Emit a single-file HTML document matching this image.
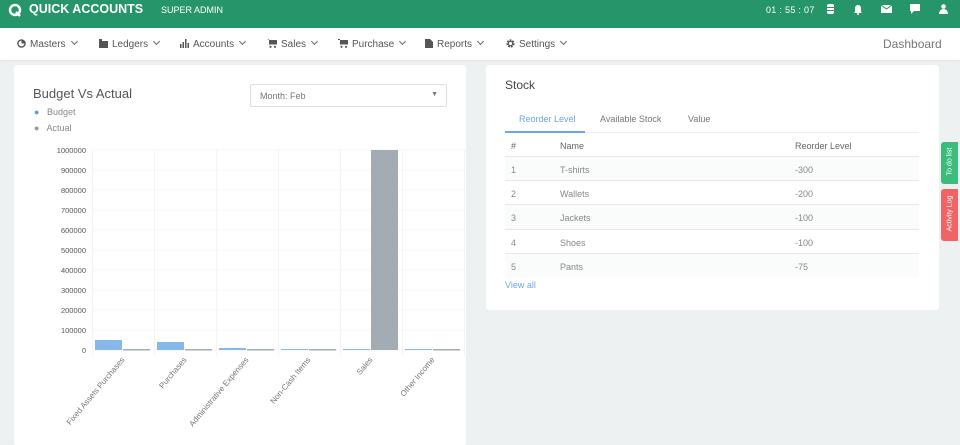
<!DOCTYPE html>
<html><head><meta charset="utf-8"><style>
*{margin:0;padding:0;box-sizing:border-box}
body{width:960px;height:434px;overflow:hidden;background:#eef1f2;font-family:"Liberation Sans",sans-serif;position:relative}
.top{position:absolute;left:0;top:0;width:960px;height:28px;background:#27956a;color:#fff}
.nav{position:absolute;left:0;top:28px;width:960px;height:32px;background:#fff;box-shadow:0 1px 2px rgba(0,0,0,.06)}
.ni{position:absolute;top:11px;font-size:10px;color:#555;white-space:nowrap}
.ni svg{vertical-align:-1px;margin-right:4px}
.ni i{font-style:normal;display:inline-block;margin-left:6px;width:5px;height:5px;border-right:1.3px solid #666;border-bottom:1.3px solid #666;transform:rotate(45deg);vertical-align:3px}
.card{position:absolute;background:#fff;border-radius:3px}
.t{position:absolute;font-size:9px;color:#888}
</style></head><body>
<div class="top">
<svg style="position:absolute;left:8px;top:3px" width="14" height="14" viewBox="0 0 14 14"><circle cx="7" cy="7" r="5" fill="none" stroke="#fff" stroke-width="2.4"/><path d="M8 9l4 4" stroke="#fff" stroke-width="2.4"/></svg>
<div style="position:absolute;left:29px;top:2px;font-size:12.5px;font-weight:bold">QUICK ACCOUNTS</div>
<div style="position:absolute;left:161px;top:5px;font-size:9px">SUPER ADMIN</div>
<div style="position:absolute;left:766px;top:5px;font-size:9px;letter-spacing:.3px">01 : 55 : 07</div>
<svg style="position:absolute;left:826px;top:4px" width="10" height="11"><rect x="1" y="0" width="7" height="10" rx="2" fill="#fff"/><path d="M1 3.5h7M1 6.5h7" stroke="#27956a"/></svg>
<svg style="position:absolute;left:853px;top:4px" width="10" height="11"><path d="M5 1c-2 0-3 1.5-3 3.5v3L1 9h8L8 7.5v-3C8 2.5 7 1 5 1z" fill="#fff"/><circle cx="5" cy="10" r="1" fill="#fff"/></svg>
<svg style="position:absolute;left:881px;top:5px" width="12" height="9"><rect width="11" height="8" fill="#fff"/><path d="M0 0l5.5 4L11 0" stroke="#27956a" fill="none"/></svg>
<svg style="position:absolute;left:910px;top:4px" width="11" height="10"><path d="M0 0h10v7H4l-3 3V7H0z" fill="#fff"/></svg>
<svg style="position:absolute;left:939px;top:4px" width="9" height="10"><circle cx="4.5" cy="2.5" r="2.3" fill="#fff"/><path d="M0 10c0-3 2-5 4.5-5S9 7 9 10z" fill="#fff"/></svg>
</div>
<div class="nav">
<div class="ni" style="left:17px"><svg width="9" height="9"><circle cx="4.5" cy="4.5" r="3.6" fill="none" stroke="#555" stroke-width="1.4"/><path d="M4.5 4.5V1A3.5 3.5 0 0 1 8 4.5z" fill="#555"/></svg>Masters<i></i></div>
<div class="ni" style="left:99px"><svg width="9" height="9"><path d="M0 0h3v9H0zM3 2h6v7H3z" fill="#555"/></svg>Ledgers<i></i></div>
<div class="ni" style="left:180px"><svg width="9" height="9"><path d="M0 5h1.5v4H0zM2.5 3H4v6H2.5zM5 0h1.5v9H5zM7.5 4H9v5H7.5z" fill="#555"/></svg>Accounts<i></i></div>
<div class="ni" style="left:267px"><svg width="10" height="9"><path d="M0 0h2l1 5h6l1-4H2.5" fill="#555"/><rect x="2" y="1" width="8" height="4.5" fill="#555"/><circle cx="3.5" cy="7.8" r="1.1" fill="#555"/><circle cx="8" cy="7.8" r="1.1" fill="#555"/></svg>Sales<i></i></div>
<div class="ni" style="left:338px"><svg width="10" height="9"><rect x="2" y="1" width="8" height="4.5" fill="#555"/><path d="M0 0.5h2" stroke="#555"/><circle cx="3.5" cy="7.8" r="1.1" fill="#555"/><circle cx="8" cy="7.8" r="1.1" fill="#555"/></svg>Purchase<i></i></div>
<div class="ni" style="left:425px"><svg width="8" height="9"><path d="M0 0h5l3 3v6H0z" fill="#555"/></svg>Reports<i></i></div>
<div class="ni" style="left:506px"><svg width="9" height="9"><circle cx="4.5" cy="4.5" r="3" fill="none" stroke="#555" stroke-width="2.2" stroke-dasharray="1.6 1"/><circle cx="4.5" cy="4.5" r="2.2" fill="none" stroke="#555" stroke-width="1.2"/></svg>Settings<i></i></div>
<div style="position:absolute;left:883px;top:9px;font-size:12px;color:#777">Dashboard</div>
</div>

<div class="card" style="left:14px;top:65px;width:452px;height:380px">
<div style="position:absolute;left:19px;top:21px;font-size:13px;color:#555">Budget Vs Actual</div>
<div style="position:absolute;left:20px;top:42px;font-size:9px;color:#888"><span style="color:#5a9ee8">●</span>&nbsp;&nbsp; Budget</div>
<div style="position:absolute;left:20px;top:58px;font-size:9px;color:#888"><span style="color:#999">●</span>&nbsp;&nbsp; Actual</div>
<div style="position:absolute;left:236px;top:19px;width:197px;height:23px;border:1px solid #ddd;border-radius:2px;font-size:9px;color:#777;padding:6px 9px">Month: Feb<span style="position:absolute;right:8px;top:6px;font-size:7px">▼</span></div>
</div>
<svg style="position:absolute;left:0;top:0" width="466" height="434">
<g stroke="#f4f4f4" stroke-width="1">
<path d="M92 150H466M92 170H466M92 190H466M92 210H466M92 230H466M92 250H466M92 270H466M92 290H466M92 310H466M92 330H466M92 350H466"/>
<path d="M92.5 150V356M154.5 150V356M216.5 150V356M278.5 150V356M340.5 150V356M402.5 150V356M464.5 150V356"/>
</g>
<g font-family="Liberation Sans" font-size="7.5" fill="#555" text-anchor="end">
<text x="86" y="153">1000000</text><text x="86" y="173">900000</text><text x="86" y="193">800000</text><text x="86" y="213">700000</text><text x="86" y="233">600000</text><text x="86" y="253">500000</text><text x="86" y="273">400000</text><text x="86" y="293">300000</text><text x="86" y="313">200000</text><text x="86" y="333">100000</text><text x="86" y="353">0</text>
</g>
<g fill="#86b9ea">
<rect x="95" y="340" width="27" height="10"/><rect x="157" y="342" width="27" height="8"/><rect x="219" y="348" width="27" height="2"/><rect x="281" y="349" width="27" height="1"/><rect x="343" y="349" width="27" height="1"/><rect x="405" y="349" width="27" height="1"/>
</g>
<g fill="#a3acb3">
<rect x="123" y="349" width="27" height="1.5"/><rect x="185" y="349" width="27" height="1.5"/><rect x="247" y="349" width="27" height="1.5"/><rect x="309" y="349" width="27" height="1.5"/><rect x="371" y="150" width="27" height="200"/><rect x="433" y="349" width="27" height="1.5"/>
</g>
<g font-family="Liberation Sans" font-size="8" fill="#777" text-anchor="end">
<text transform="translate(125,360) rotate(-50)">Fixed Assets Purchases</text>
<text transform="translate(187,360) rotate(-50)">Purchases</text>
<text transform="translate(249,360) rotate(-50)">Administrative Expenses</text>
<text transform="translate(311,360) rotate(-50)">Non-Cash Items</text>
<text transform="translate(373,360) rotate(-50)">Sales</text>
<text transform="translate(435,360) rotate(-50)">Other Income</text>
</g>
</svg>

<div class="card" style="left:486px;top:65px;width:453px;height:245px">
<div style="position:absolute;left:19px;top:13px;font-size:12px;color:#444">Stock</div>
<div style="position:absolute;left:33px;top:49px;font-size:9px;color:#6aa6e8">Reorder Level</div>
<div style="position:absolute;left:114px;top:49px;font-size:9px;color:#777">Available Stock</div>
<div style="position:absolute;left:202px;top:49px;font-size:9px;color:#777">Value</div>
<div style="position:absolute;left:19px;top:67px;width:414px;height:1px;background:#eee"></div>
<div style="position:absolute;left:19px;top:66px;width:80px;height:2px;background:#6aa6e8"></div>
<div style="position:absolute;left:19px;top:68px;width:414px;height:170px">
<div style="height:24px;border-bottom:1px solid #e8e8e8;position:relative"><span class="t" style="left:6px;top:8px;color:#666">#</span><span class="t" style="left:55px;top:8px;color:#666">Name</span><span class="t" style="left:290px;top:8px;color:#666">Reorder Level</span></div>
<div style="height:24px;border-bottom:1px solid #e8e8e8;background:#fafbfb;position:relative"><span class="t" style="left:6px;top:8px">1</span><span class="t" style="left:55px;top:8px">T-shirts</span><span class="t" style="left:290px;top:8px">-300</span></div>
<div style="height:24px;border-bottom:1px solid #e8e8e8;position:relative"><span class="t" style="left:6px;top:8px">2</span><span class="t" style="left:55px;top:8px">Wallets</span><span class="t" style="left:290px;top:8px">-200</span></div>
<div style="height:25px;border-bottom:1px solid #e8e8e8;background:#fafbfb;position:relative"><span class="t" style="left:6px;top:8px">3</span><span class="t" style="left:55px;top:8px">Jackets</span><span class="t" style="left:290px;top:8px">-100</span></div>
<div style="height:24px;border-bottom:1px solid #e8e8e8;position:relative"><span class="t" style="left:6px;top:8px">4</span><span class="t" style="left:55px;top:8px">Shoes</span><span class="t" style="left:290px;top:8px">-100</span></div>
<div style="height:23px;background:#fafbfb;position:relative"><span class="t" style="left:6px;top:8px">5</span><span class="t" style="left:55px;top:8px">Pants</span><span class="t" style="left:290px;top:8px">-75</span></div>
</div>
<div style="position:absolute;left:19px;top:215px;font-size:9px;color:#6aa6e8">View all</div>
</div>

<div style="position:absolute;left:941px;top:142px;width:17px;height:42px;background:#3dbb7c;border-radius:3px 0 0 3px"><div style="position:absolute;left:-12px;top:16px;width:42px;transform:rotate(-90deg);font-size:7px;color:#fff;text-align:center">To do list</div></div>
<div style="position:absolute;left:941px;top:189px;width:17px;height:52px;background:#f06466;border-radius:3px 0 0 3px"><div style="position:absolute;left:-17px;top:21px;width:52px;transform:rotate(-90deg);font-size:7px;color:#fff;text-align:center">Activity Log</div></div>
</body></html>
